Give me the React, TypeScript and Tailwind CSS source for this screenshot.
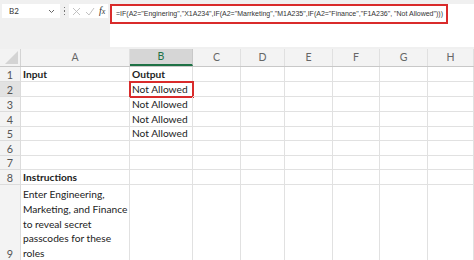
import React from "react";

const font = { fontFamily: "Lato, 'Noto Sans', sans-serif" };

const colWidths = ["w-[109px]", "w-[63px]", "w-[48px]", "w-[44px]", "w-[48px]", "w-[47px]", "w-[48px]", "flex-1"];
const colLetters = ["A", "B", "C", "D", "E", "F", "G", "H"];

type Row = { n: number; h: string; a?: React.ReactNode; b?: React.ReactNode };

const rows: Row[] = [
  { n: 1, h: "h-[15px]", a: <span className="font-bold">Input</span>, b: <span className="font-bold">Output</span> },
  { n: 2, h: "h-[15px]", b: "Not Allowed" },
  { n: 3, h: "h-[15px]", b: "Not Allowed" },
  { n: 4, h: "h-[15px]", b: "Not Allowed" },
  { n: 5, h: "h-[14px]", b: "Not Allowed" },
  { n: 6, h: "h-[15px]" },
  { n: 7, h: "h-[14px]" },
  { n: 8, h: "h-[15px]", a: <span className="font-bold">Instructions</span> },
  {
    n: 9,
    h: "h-[76px]",
    a: (
      <>
        Enter Engineering,
        <br />
        Marketing, and Finance
        <br />
        to reveal secret
        <br />
        passcodes for these
        <br />
        roles
      </>
    )
  }
];

function FormulaBar() {
  return (
    <div className="flex h-[49px] bg-[#f0f0f0]">
      <div className="flex w-[110px] items-start pt-[4px] pl-[2px]">
        <div className="flex h-[14px] w-[58px] items-center justify-between bg-white pl-[7px] pr-[5px] text-[8px] text-[#333]">
          <span>B2</span>
          <svg width="7" height="5" viewBox="0 0 7 5" fill="none" stroke="#666" strokeWidth="1">
            <path d="M1 1l2.5 2.5L6 1" />
          </svg>
        </div>
        <div className="mx-[2px] flex h-[14px] w-[5px] flex-col items-center justify-center gap-[2px]">
          <span className="h-[1.5px] w-[1.5px] bg-[#777]" />
          <span className="h-[1.5px] w-[1.5px] bg-[#777]" />
          <span className="h-[1.5px] w-[1.5px] bg-[#777]" />
        </div>
        <div className="flex h-[14px] w-[39px] items-center gap-[4px] bg-white pl-[3px]">
          <svg width="9" height="9" viewBox="0 0 9 9" stroke="#bbb" strokeWidth="0.9">
            <path d="M1 1l7 7M8 1L1 8" />
          </svg>
          <svg width="10" height="9" viewBox="0 0 10 9" fill="none" stroke="#bbb" strokeWidth="0.9">
            <path d="M1 5l3 3 5-7" />
          </svg>
          <span className="font-['Liberation_Serif',serif] text-[10px] italic leading-none text-[#333]">
            f<span className="text-[8px]">x</span>
          </span>
        </div>
      </div>
      <div className="mt-[4px] mb-[2px] flex-1 bg-white pr-[26px]">
        <div
          className="flex h-[20px] items-center whitespace-nowrap border-2 border-[#d92b2b] pl-[4px] text-[7px] text-[#333]"
          style={{ fontFamily: "'Liberation Sans', Arial, sans-serif" }}
        >
          =IF(A2="Enginering","X1A234",IF(A2="Marrketing","M1A235",IF(A2="Finance","F1A236", "Not Allowed")))
        </div>
      </div>
    </div>
  );
}

function HeaderRow() {
  return (
    <div className="flex h-[18px] border-b border-[#c8c8c8] bg-[#f3f3f3] text-[10.5px] text-[#666]">
      <div className="relative w-[21px] shrink-0 border-r border-[#d4d4d4]">
        <svg className="absolute right-[2px] bottom-[2px]" width="13" height="13" viewBox="0 0 13 13">
          <path d="M13 0L13 13L0 13Z" fill="#d4d4d4" />
        </svg>
      </div>
      {colLetters.map((l, i) => (
        <div
          key={l}
          className={`${colWidths[i]} flex shrink-0 items-center justify-center border-r pt-[1px] ${
            l === "B"
              ? "border-[#c8c8c8] border-b-2 border-b-[#1e7145] bg-[#d6d6d6] text-[#1e7145]"
              : "border-[#e0e0e0]"
          }`}
        >
          {l}
        </div>
      ))}
    </div>
  );
}

function Sheet() {
  return (
    <div className="text-[10.2px] text-[#222]">
      {rows.map((r) => (
        <div key={r.n} className={`flex ${r.h}`}>
          <div
            className={`flex w-[21px] shrink-0 items-end justify-center border-r border-b border-[#dcdcdc] text-[10.8px] leading-[13.5px] text-[#555] ${
              r.n === 2 ? "bg-[#e2e2e2]" : "bg-[#f3f3f3]"
            }`}
          >
            {r.n}
          </div>
          {colWidths.map((w, i) => {
            const content = i === 0 ? r.a : i === 1 ? r.b : null;
            const selected = r.n === 2 && i === 1;
            return (
              <div
                key={i}
                className={`${w} relative flex shrink-0 items-end border-r border-b border-[#e1e1e1] pl-[2px] leading-[14.8px]`}
              >
                {selected ? (
                  <div className="absolute -top-px -left-px right-[-2px] bottom-[-2px] border-2 border-[#d92b2b]" />
                ) : null}
                {content ? <div className="mb-[-1px] whitespace-nowrap">{content}</div> : null}
              </div>
            );
          })}
        </div>
      ))}
    </div>
  );
}

export default function App() {
  return (
    <div className="h-[260px] w-[474px] overflow-hidden bg-white" style={font}>
      <FormulaBar />
      <HeaderRow />
      <Sheet />
    </div>
  );
}
